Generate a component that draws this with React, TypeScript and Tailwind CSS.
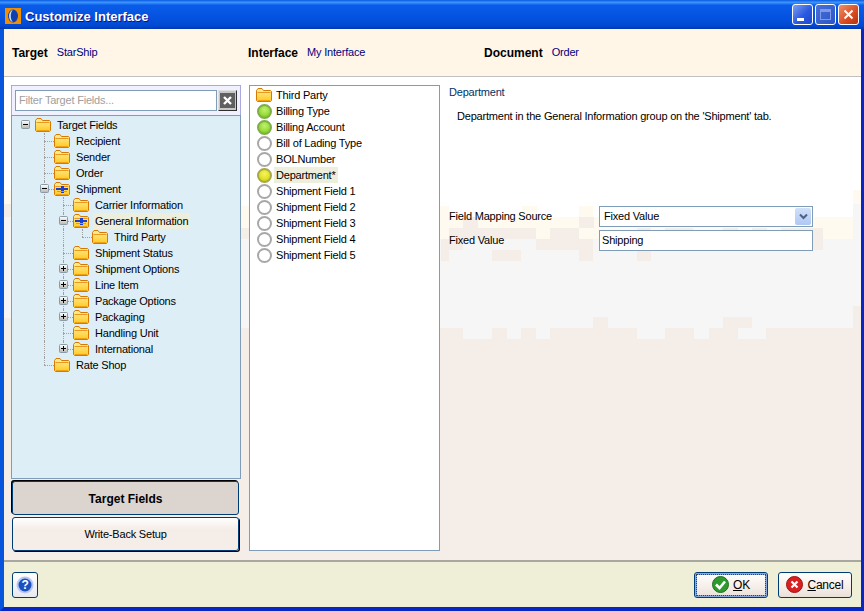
import type { ReactNode } from 'react';

type Cell = 'blank' | 'pipe';
type Connector = 'tee' | 'elbow' | 'none';

type TreeNode = {
  label: string;
  cells: Cell[];
  connector: Connector;
  expander?: 'plus' | 'minus';
  open?: boolean;
  selected?: boolean;
};

const TREE: TreeNode[] = [
  { label: 'Target Fields', cells: [], connector: 'none', expander: 'minus' },
  { label: 'Recipient', cells: ['blank'], connector: 'tee' },
  { label: 'Sender', cells: ['blank'], connector: 'tee' },
  { label: 'Order', cells: ['blank'], connector: 'tee' },
  { label: 'Shipment', cells: ['blank'], connector: 'tee', expander: 'minus', open: true },
  { label: 'Carrier Information', cells: ['blank', 'pipe'], connector: 'tee' },
  { label: 'General Information', cells: ['blank', 'pipe'], connector: 'tee', expander: 'minus', open: true, selected: true },
  { label: 'Third Party', cells: ['blank', 'pipe', 'pipe'], connector: 'elbow' },
  { label: 'Shipment Status', cells: ['blank', 'pipe'], connector: 'tee' },
  { label: 'Shipment Options', cells: ['blank', 'pipe'], connector: 'tee', expander: 'plus' },
  { label: 'Line Item', cells: ['blank', 'pipe'], connector: 'tee', expander: 'plus' },
  { label: 'Package Options', cells: ['blank', 'pipe'], connector: 'tee', expander: 'plus' },
  { label: 'Packaging', cells: ['blank', 'pipe'], connector: 'tee', expander: 'plus' },
  { label: 'Handling Unit', cells: ['blank', 'pipe'], connector: 'tee' },
  { label: 'International', cells: ['blank', 'pipe'], connector: 'elbow', expander: 'plus' },
  { label: 'Rate Shop', cells: ['blank'], connector: 'elbow' },
];

const FIELDS: { label: string; status: 'green' | 'yellow' | 'empty' }[] = [
  { label: 'Billing Type', status: 'green' },
  { label: 'Billing Account', status: 'green' },
  { label: 'Bill of Lading Type', status: 'empty' },
  { label: 'BOLNumber', status: 'empty' },
  { label: 'Department*', status: 'yellow' },
  { label: 'Shipment Field 1', status: 'empty' },
  { label: 'Shipment Field 2', status: 'empty' },
  { label: 'Shipment Field 3', status: 'empty' },
  { label: 'Shipment Field 4', status: 'empty' },
  { label: 'Shipment Field 5', status: 'empty' },
];

const ROSE: [number, number, number, number][] = [
  [4, 204, 8, 13],
  [241, 228, 8, 11],
  [463, 217, 15, 11],
  [579, 217, 15, 11],
  [449, 228, 87, 11],
  [550, 228, 29, 11],
  [637, 228, 14, 11],
  [665, 228, 28, 11],
  [723, 228, 15, 11],
  [752, 228, 15, 11],
  [781, 228, 42, 11],
  [441, 239, 22, 11],
  [536, 239, 57, 11],
  [781, 239, 42, 11],
  [441, 250, 8, 11],
  [492, 250, 29, 11],
  [579, 250, 14, 11],
  [637, 250, 14, 11],
  [593, 317, 15, 11],
  [723, 317, 29, 11],
  [853, 306, 8, 22],
  [4, 318, 8, 21],
  [241, 328, 200, 11],
  [441, 328, 22, 11],
  [492, 328, 15, 11],
  [521, 328, 15, 11],
  [550, 328, 87, 11],
  [665, 328, 29, 11],
  [709, 328, 29, 11],
  [766, 328, 95, 11],
  [4, 339, 857, 221],
];

const Backdrop = () => (
  <svg
    aria-hidden
    className="absolute inset-0 h-full w-full"
    viewBox="4 77 857 483"
    preserveAspectRatio="none"
    shapeRendering="crispEdges"
  >
    <rect x="4" y="190" width="8" height="14" fill="#fffaf0" />
    <rect x="853" y="190" width="8" height="14" fill="#fffaf0" />
    <rect x="441" y="206" width="8" height="11" fill="#fffaf0" />
    <rect x="522" y="206" width="15" height="11" fill="#fffaf0" />
    <rect x="579" y="206" width="14" height="11" fill="#fffaf0" />
    <rect x="241" y="206" width="200" height="33" fill="#fffaf0" />
    <rect x="441" y="217" width="412" height="22" fill="#fffaf0" />
    <rect x="4" y="217" width="8" height="101" fill="#f6f6f6" />
    <rect x="853" y="204" width="8" height="102" fill="#f6f6f6" />
    <rect x="241" y="239" width="620" height="100" fill="#f6f6f6" />
    {ROSE.map(([x, y, width, height]) => (
      <rect key={`${x}-${y}`} x={x} y={y} width={width} height={height} fill="#f5ede8" />
    ))}
  </svg>
);

const Folder = ({ open = false }: { open?: boolean }) => (
  <svg width="16" height="14" viewBox="0 0 16 14" className="shrink-0">
    <defs>
      <linearGradient id="folderFill" x1="0" y1="0" x2="0" y2="1">
        <stop offset="0" stopColor="#fff0a0" />
        <stop offset="1" stopColor="#ffc820" />
      </linearGradient>
    </defs>
    <path d="M0.5 12.5V2.5L2 0.5H6L7.5 2.5H14.5L15.5 3.5V12.5L14.5 13.5H1.5Z" fill="url(#folderFill)" stroke="#d97a00" />
    <path d="M1.5 4.5H14.5" stroke="#e89a20" />
    <path d="M2 12.5H14" stroke="#f0a010" />
    {open && (
      <>
        <rect x="2" y="6" width="12" height="2" fill="#1c3fd0" />
        <rect x="7" y="4" width="3" height="7" fill="#1c3fd0" />
        <rect x="3" y="9" width="10" height="1" fill="#8aa0e8" />
      </>
    )}
  </svg>
);

const Expander = ({ kind }: { kind: 'plus' | 'minus' }) => (
  <svg width="9" height="9" viewBox="0 0 9 9" className="absolute left-[5px] top-[3px]">
    <defs>
      <linearGradient id="expanderFill" x1="0" y1="0" x2="0" y2="1">
        <stop offset="0" stopColor="#ffffff" />
        <stop offset="1" stopColor="#b8b8b0" />
      </linearGradient>
    </defs>
    <rect x="0.5" y="0.5" width="8" height="8" rx="1" fill="url(#expanderFill)" stroke="#8a9aa8" />
    <path d="M2 4.5H7" stroke="#000" />
    {kind === 'plus' && <path d="M4.5 2V7" stroke="#000" />}
  </svg>
);

const TreeRow = ({ node }: { node: TreeNode }) => (
  <div className="flex h-4 items-center">
    {node.cells.map((cell, index) => (
      <span key={index} className="relative h-4 w-[19px] shrink-0">
        {cell === 'pipe' && (
          <span className="absolute left-[9px] top-0 h-4 border-l border-dotted border-[#a0a0a0]" />
        )}
      </span>
    ))}
    <span className="relative h-4 w-[19px] shrink-0">
      {node.connector !== 'none' && (
        <>
          <span
            className={`absolute left-[9px] top-0 border-l border-dotted border-[#a0a0a0] ${node.connector === 'tee' ? 'h-4' : 'h-2'}`}
          />
          <span className="absolute left-[9px] top-2 w-[10px] border-t border-dotted border-[#a0a0a0]" />
        </>
      )}
      {node.expander && <Expander kind={node.expander} />}
    </span>
    <Folder open={node.open} />
    <span className={`ml-[4px] px-[2px] leading-4 ${node.selected ? 'bg-[#eeeedd]' : ''}`}>{node.label}</span>
  </div>
);

const StatusDot = ({ status }: { status: 'green' | 'yellow' | 'empty' }) => {
  const fill = {
    green: 'bg-[radial-gradient(circle_at_50%_35%,#c0f070,#96dc38_60%,#68a818)] border-[#7fae48]',
    yellow: 'bg-[radial-gradient(circle_at_50%_35%,#f4f460,#e0e028_60%,#b0b018)] border-[#a8a848]',
    empty: 'bg-white border-[#a8a8a8]',
  }[status];
  return <span className={`h-[15px] w-[15px] shrink-0 rounded-full border-2 ${fill}`} />;
};

const HeaderField = ({ label, value, className }: { label: string; value: string; className: string }) => (
  <div className={`flex items-center ${className}`}>
    <span className="font-bold text-[12px] tracking-normal text-black">{label}</span>
    <span className="ml-[9px] text-[#000080]">{value}</span>
  </div>
);

const CaptionButton = ({ children, className }: { children: ReactNode; className: string }) => (
  <span className={`flex h-[21px] w-[21px] items-center justify-center rounded-[3px] border border-white ${className}`}>
    {children}
  </span>
);

const NavButton = ({ label, active = false }: { label: string; active?: boolean }) => (
  <button
    type="button"
    className={`ml-[1px] mr-[2px] flex h-[34px] items-center justify-center rounded-[3px] border border-[#003c74] ${
      active
        ? 'bg-[#dcd4ce] pt-[1px] font-bold text-[12px] tracking-normal shadow-[-1px_-1px_0_#000]'
        : 'bg-[linear-gradient(#ffffff,#f5ede8_35%)] shadow-[1px_1px_0_#000]'
    }`}
  >
    {label}
  </button>
);

const DialogButton = ({ children, focused = false }: { children: ReactNode; focused?: boolean }) => (
  <button
    type="button"
    className={`flex h-[26px] w-[74px] items-center justify-center gap-1 rounded-[3px] border border-[#003c74] bg-[linear-gradient(#ffffff,#f5ede8_60%,#e8e0d8)] ${
      focused ? 'outline-1 -outline-offset-3 outline-dotted outline-[#404040] shadow-[inset_0_0_0_2px_#8aa8e0]' : ''
    }`}
  >
    {children}
  </button>
);

const App = () => (
  <div className="flex h-[611px] w-[864px] flex-col overflow-hidden bg-[#0831d9] font-['Liberation_Sans',Arial,sans-serif] text-[11px] tracking-[-0.2px] text-black">
    <div className="flex h-[29px] shrink-0 items-center bg-[linear-gradient(#0a5ae0,#3d95ff_8%,#0a5ce8_18%,#0453e0_60%,#0048d0_90%,#0038b0)] pl-[5px] pr-[5px]">
      <svg width="16" height="16" viewBox="0 0 16 16" className="mt-[2px]">
        <rect width="16" height="16" fill="#f09000" />
        <ellipse cx="8" cy="8" rx="5" ry="6.5" fill="#1040b0" />
        <path d="M8 2C5 4 5 12 8 14C6 14 4 11 4 8S6 2 8 2Z" fill="#c0e0ff" />
      </svg>
      <span className="ml-1 mt-[4px] font-bold text-[13px] tracking-normal text-white [text-shadow:1px_1px_0_#0f1089]">
        Customize Interface
      </span>
      <div className="ml-auto flex gap-[2px]">
        <CaptionButton className="bg-[linear-gradient(135deg,#7fa0f0,#2a5ae0_55%,#1a48d0)]">
          <span className="mr-[5px] mt-[9px] h-[3px] w-[7px] bg-white" />
        </CaptionButton>
        <CaptionButton className="border-[#7f9be8]/70 bg-[linear-gradient(135deg,#4a70d8,#2a55c8)]">
          <span className="h-[11px] w-[11px] border border-t-[3px] border-[#7f9be8]" />
        </CaptionButton>
        <CaptionButton className="bg-[linear-gradient(135deg,#f0906a,#d84a20_60%,#b83010)]">
          <svg width="11" height="11" viewBox="0 0 11 11">
            <path d="M1.5 1.5L9.5 9.5M9.5 1.5L1.5 9.5" stroke="#fff" strokeWidth="2" />
          </svg>
        </CaptionButton>
      </div>
    </div>

    <div className="flex min-h-0 flex-1 flex-col border-b-[4px] border-l-[4px] border-r-[3px] border-b-[#0826c4] border-l-[#0855dd] border-r-[#0826c4] bg-white">
      <div className="flex h-[48px] shrink-0 items-center border-b border-[#c0c0c0] bg-[#fff6e7] pl-2">
        <HeaderField label="Target" value="StarShip" className="w-[236px]" />
        <HeaderField label="Interface" value="My Interface" className="w-[236px]" />
        <HeaderField label="Document" value="Order" className="" />
      </div>

      <div className="relative flex min-h-0 flex-1 pl-[7px] pr-[47px] pt-2">
        <Backdrop />
        <div className="relative z-10 flex w-[230px] shrink-0 flex-col">
          <div className="flex h-[31px] items-center gap-px border border-[#a9a9e0] bg-[#f0f0ff] pl-[3px]">
            <div className="flex h-[21px] w-[202px] items-center border border-[#7f9db9] bg-white pl-[3px] text-[#a0a0a0]">
              Filter Target Fields...
            </div>
            <div className="flex h-[21px] w-[19px] items-center justify-center border border-[#e0e0e0] border-b-[#303030] border-r-[#303030] bg-[#c8c8c8]">
              <span className="flex h-[15px] w-[15px] items-center justify-center bg-[#606060]">
                <svg width="11" height="11" viewBox="0 0 11 11">
                  <path d="M2 2L9 9M9 2L2 9" stroke="#fff" strokeWidth="2.4" />
                </svg>
              </span>
            </div>
          </div>
          <div className="-mt-px h-[364px] border border-[#7f9db9] bg-[#deeef6] pl-1 pt-px">
            {TREE.map((node) => (
              <TreeRow key={node.label} node={node} />
            ))}
          </div>
          <div className="mt-[2px] flex flex-col gap-[2px]">
            <NavButton label="Target Fields" active />
            <NavButton label="Write-Back Setup" />
          </div>
        </div>

        <div className="relative z-10 ml-2 h-[466px] w-[191px] shrink-0 border border-[#7f9db9] bg-white pl-[6px] pt-[1px]">
          <div className="flex h-4 items-center">
            <Folder />
            <span className="ml-[2px] px-[2px] leading-4">Third Party</span>
          </div>
          {FIELDS.map((field) => (
            <div key={field.label} className="flex h-4 items-center">
              <span className="flex w-4 justify-center">
                <StatusDot status={field.status} />
              </span>
              <span className={`ml-[2px] px-[2px] leading-4 ${field.status === 'yellow' ? 'bg-[#eeeedd]' : ''}`}>{field.label}</span>
            </div>
          ))}
        </div>

        <div className="relative z-10 ml-[9px] -mt-px flex w-[364px] shrink-0 flex-col">
          <span className="leading-4 text-[#003366]">Department</span>
          <p className="ml-2 mt-2 whitespace-nowrap leading-4">
            Department in the General Information group on the 'Shipment' tab.
          </p>
          <div className="mt-[82px] flex h-[21px] items-center">
            <span className="w-[150px]">Field Mapping Source</span>
            <div className="flex h-[21px] w-[214px] items-center border border-[#7f9db9] bg-white pl-1">
              Fixed Value
              <span className="ml-auto mr-px flex h-[17px] w-4 items-center justify-center rounded-[2px] bg-[linear-gradient(#d0e0f8,#aec8f5)]">
                <svg width="9" height="7" viewBox="0 0 9 7">
                  <path d="M1 1.5L4.5 5L8 1.5" fill="none" stroke="#4d6185" strokeWidth="2" />
                </svg>
              </span>
            </div>
          </div>
          <div className="mt-[3px] flex h-[21px] items-center">
            <span className="w-[150px]">Fixed Value</span>
            <div className="flex h-[21px] w-[214px] items-center border border-[#7f9db9] bg-white pl-[2px]">Shipping</div>
          </div>
        </div>
      </div>

      <div className="flex h-[47px] shrink-0 items-center border-t-2 border-[#a8a8a0] bg-[#efefd7] pl-2 pr-[9px]">
        <button
          type="button"
          className="flex h-[26px] w-[26px] items-center justify-center rounded-[3px] border border-[#003c74] bg-[linear-gradient(#ffffff,#e8e8f0)]"
        >
          <svg width="18" height="18" viewBox="0 0 18 18">
            <circle cx="9" cy="9" r="8.5" fill="#b8c8f0" />
            <circle cx="9" cy="9" r="6.5" fill="#1c50c0" />
            <text x="9" y="13" textAnchor="middle" fontSize="12" fontWeight="700" fill="#fff" fontFamily="Liberation Sans">
              ?
            </text>
          </svg>
        </button>
        <div className="ml-auto flex gap-[10px] text-[12px]">
          <DialogButton focused>
            <svg width="17" height="17" viewBox="0 0 17 17">
              <circle cx="8.5" cy="8.5" r="8" fill="#2e9a2e" stroke="#1c701c" />
              <path d="M4 8.5L7.5 12L13 5.5" fill="none" stroke="#fff" strokeWidth="2.6" />
            </svg>
            <span>
              <span className="underline">O</span>K
            </span>
          </DialogButton>
          <DialogButton>
            <svg width="17" height="17" viewBox="0 0 17 17">
              <circle cx="8.5" cy="8.5" r="8" fill="#d82020" stroke="#a01010" />
              <path d="M5.5 5.5L11.5 11.5M11.5 5.5L5.5 11.5" stroke="#fff" strokeWidth="2.2" />
            </svg>
            <span>
              <span className="underline">C</span>ancel
            </span>
          </DialogButton>
        </div>
      </div>
    </div>
  </div>
);

export default App;
